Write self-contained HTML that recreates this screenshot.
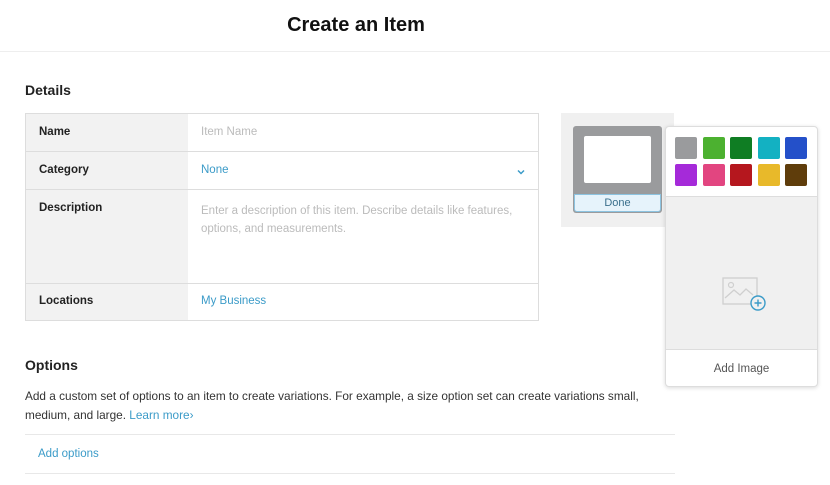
<!DOCTYPE html>
<html><head><style>
*{margin:0;padding:0;box-sizing:border-box}
body{width:830px;height:485px;background:#fff;font-family:"Liberation Sans",sans-serif;position:relative;overflow:hidden;color:#222}
.a{position:absolute}
.lbl{font-size:11.5px;font-weight:bold;color:#222}
.sw{position:absolute;width:22px;height:22px;border-radius:2px}
</style></head><body>
<div class="a" style="left:0;top:0;width:830px;height:52px;border-bottom:1px solid #eee"></div>
<div class="a" style="left:0;top:14px;width:712px;text-align:center;font-size:20px;font-weight:bold;color:#111">Create an Item</div>
<div class="a" style="left:25px;top:82px;font-size:14px;font-weight:bold">Details</div>

<div class="a" style="left:25px;top:113px;width:514px;height:208px;border:1px solid #ddd;background:#fff"></div>
<div class="a" style="left:26px;top:114px;width:162px;height:206px;background:#f2f2f2"></div>
<div class="a" style="left:26px;top:151px;width:512px;height:1px;background:#ddd"></div>
<div class="a" style="left:26px;top:189px;width:512px;height:1px;background:#ddd"></div>
<div class="a" style="left:26px;top:283px;width:512px;height:1px;background:#ddd"></div>
<div class="a lbl" style="left:39px;top:126px">Name</div>
<div class="a lbl" style="left:39px;top:164px">Category</div>
<div class="a lbl" style="left:39px;top:202px">Description</div>
<div class="a lbl" style="left:39px;top:295px">Locations</div>
<div class="a" style="left:201px;top:126px;font-size:11.5px;color:#bbb">Item Name</div>
<div class="a" style="left:201px;top:164px;font-size:11.5px;color:#3b9bc8">None</div>
<svg class="a" style="left:517px;top:169px" width="8" height="6"><path d="M1 1.5L4 4.5L7 1.5" stroke="#3b9bc8" stroke-width="1.5" fill="none"/></svg>
<div class="a" style="left:201px;top:202px;width:335px;font-size:11.5px;line-height:18px;color:#bbb">Enter a description of this item. Describe details like features, options, and measurements.</div>
<div class="a" style="left:201px;top:295px;font-size:11.5px;color:#3b9bc8">My Business</div>

<div class="a" style="left:25px;top:357px;font-size:14px;font-weight:bold">Options</div>
<div class="a" style="left:25px;top:387px;width:650px;font-size:11.8px;line-height:19px;color:#333">Add a custom set of options to an item to create variations. For example, a size option set can create variations small, medium, and large. <span style="color:#3b9bc8">Learn more›</span></div>
<div class="a" style="left:25px;top:434px;width:650px;height:1px;background:#e8e8e8"></div>
<div class="a" style="left:38px;top:448px;font-size:11.5px;color:#3b9bc8">Add options</div>
<div class="a" style="left:25px;top:473px;width:650px;height:1px;background:#e8e8e8"></div>

<div class="a" style="left:561px;top:113px;width:113px;height:114px;background:#f0f0f0"></div>
<div class="a" style="left:573px;top:126px;width:89px;height:87px;background:#9a9b9d;border-radius:3px"></div>
<div class="a" style="left:584px;top:136px;width:67px;height:47px;background:#fff;border-radius:2px"></div>
<div class="a" style="left:574px;top:194px;width:87px;height:18px;background:#e6f3fb;border:1px solid #8cc3e0;border-radius:0 0 3px 3px;font-size:11px;text-align:center;line-height:16px;color:#3a6f8c">Done</div>

<div class="a" style="left:665px;top:126px;width:153px;height:261px;background:#fff;border:1px solid #ddd;border-radius:4px;box-shadow:0 1px 4px rgba(0,0,0,.15)"></div>
<div class="sw" style="left:675px;top:137px;background:#9a9b9d"></div>
<div class="sw" style="left:703px;top:137px;background:#4cb130"></div>
<div class="sw" style="left:730px;top:137px;background:#0f7d23"></div>
<div class="sw" style="left:758px;top:137px;background:#13b1c2"></div>
<div class="sw" style="left:785px;top:137px;background:#2450c9"></div>
<div class="sw" style="left:675px;top:164px;background:#a52ad9"></div>
<div class="sw" style="left:703px;top:164px;background:#e24580"></div>
<div class="sw" style="left:730px;top:164px;background:#b5171e"></div>
<div class="sw" style="left:758px;top:164px;background:#e8b92a"></div>
<div class="sw" style="left:785px;top:164px;background:#5f3d0b"></div>
<div class="a" style="left:666px;top:196px;width:151px;height:154px;background:#f0f0f0;border-top:1px solid #ddd;border-bottom:1px solid #ddd"></div>
<svg class="a" style="left:720px;top:276px" width="48" height="36">
<rect x="3" y="2" width="34" height="26" fill="none" stroke="#cfcfcf" stroke-width="1.3"/>
<circle cx="11" cy="9" r="2.5" fill="none" stroke="#cfcfcf" stroke-width="1.2"/>
<path d="M5 22L14 14L20 19L26 13L33 19" fill="none" stroke="#cfcfcf" stroke-width="1.3"/>
<circle cx="38" cy="27" r="7" fill="#f0f0f0" stroke="#3b9bc8" stroke-width="1.4"/>
<path d="M38 23.5V30.5M34.5 27H41.5" stroke="#3b9bc8" stroke-width="1.4"/>
</svg>
<div class="a" style="left:666px;top:363px;width:151px;text-align:center;font-size:11.5px;color:#555">Add Image</div>
</body></html>
